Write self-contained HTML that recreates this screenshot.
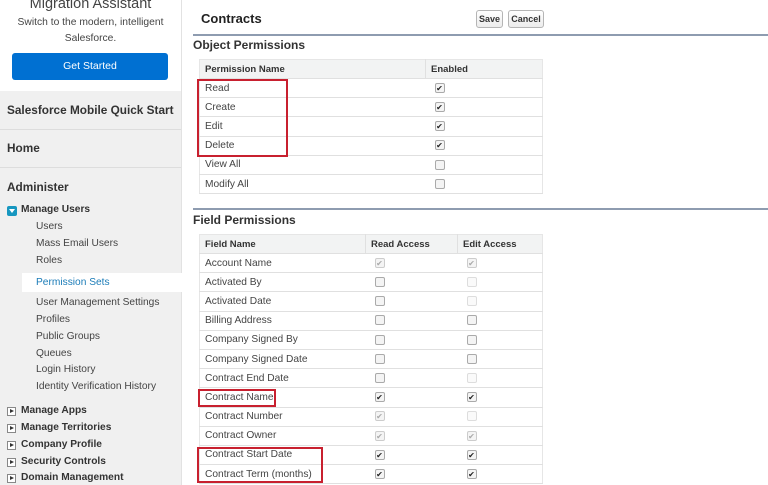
<!DOCTYPE html>
<html><head><style>
*{margin:0;padding:0;box-sizing:border-box}
body{width:768px;height:485px;overflow:hidden;background:#fff;font-family:"Liberation Sans",Arial,sans-serif;position:relative;color:#333}
.a{position:absolute;white-space:nowrap}
#side{position:absolute;left:0;top:0;width:182px;height:485px;background:#f0f0f0;border-right:1px solid #e2e2e2}
.hd{font-weight:bold;font-size:11.8px;color:#333;left:7px}
.sub{font-size:10.2px;color:#444;left:36px}
.grp{font-size:10.2px;font-weight:bold;color:#333;left:21px}
.tri{position:absolute;left:7px;width:9px;height:9px;border:1px solid #888;background:#fff}
.tri:after{content:"";position:absolute;left:2px;top:1px;border-left:4px solid #333;border-top:2.5px solid transparent;border-bottom:2.5px solid transparent}
table{border-collapse:collapse;position:absolute;font-size:10.2px;color:#444}
td,th{border-bottom:1px solid #e0e0e0;text-align:left;padding:0 0 0 5px;height:19.2px;font-weight:normal}
th{background:#f2f3f3;font-weight:bold;font-size:9.5px;color:#333;height:19px;border-right:1px solid #e0e0e0}
th:last-child{border-right:none}
table{border:1px solid #e6e6e6}
.cb{display:inline-block;width:10px;height:10px;border:1px solid #aaa;border-radius:2px;background:#f4f4f4;vertical-align:middle;position:relative;font-size:9px;line-height:8px;text-align:center;color:#222}
.cb.c:after{content:"✔";font-size:8px}
.cb.g{border-color:#ccc}
.cb.g.c:after{color:#aaa}
.cb.l{border-color:#ddd;background:#fafafa}
.red{position:absolute;border:2px solid #c8202f}
.btn{position:absolute;top:10px;height:18px;border:1px solid #b5b5b5;border-radius:3px;background:linear-gradient(#fff,#ececec);font-size:9px;font-weight:bold;color:#333;text-align:center;line-height:16px}
</style></head><body>
<div id="side">
<div style="position:absolute;left:0;top:0;width:181px;height:91px;background:#fff"></div>
<div class="a" style="left:0;width:181px;text-align:center;top:-4px;font-size:14.5px;color:#444">Migration Assistant</div>
<div class="a" style="left:0;width:181px;text-align:center;top:17px;font-size:10.3px;color:#444">Switch to the modern, intelligent</div>
<div class="a" style="left:0;width:181px;text-align:center;top:33px;font-size:10.3px;color:#444">Salesforce.</div>
<div class="a" style="left:12px;top:53px;width:156px;height:27px;background:#0070d2;border-radius:3px;color:#fff;font-size:10.5px;text-align:center;line-height:27px">Get Started</div>
<div class="a hd" style="top:103px">Salesforce Mobile Quick Start</div>
<div class="a" style="left:0;top:129px;width:181px;border-top:1px solid #ddd"></div>
<div class="a hd" style="top:141px">Home</div>
<div class="a" style="left:0;top:167px;width:181px;border-top:1px solid #ddd"></div>
<div class="a hd" style="top:180px">Administer</div>
<div class="a" style="left:7px;top:206px;width:10px;height:10px;background:#1797c0;border-radius:2px"></div>
<div class="a" style="left:9px;top:209px;border-top:4px solid #fff;border-left:3px solid transparent;border-right:3px solid transparent"></div>
<div class="a grp" style="top:204px">Manage Users</div>
<div class="a sub" style="top:221px">Users</div>
<div class="a sub" style="top:238px">Mass Email Users</div>
<div class="a sub" style="top:255px">Roles</div>
<div class="a" style="left:22px;top:273px;width:160px;height:19px;background:#fff"></div>
<div class="a sub" style="top:277px;color:#1b7cb8">Permission Sets</div>
<div class="a sub" style="top:297px">User Management Settings</div>
<div class="a sub" style="top:314px">Profiles</div>
<div class="a sub" style="top:331px">Public Groups</div>
<div class="a sub" style="top:348px">Queues</div>
<div class="a sub" style="top:364px">Login History</div>
<div class="a sub" style="top:381px">Identity Verification History</div>
<div class="tri" style="top:407px"></div><div class="a grp" style="top:405px">Manage Apps</div>
<div class="tri" style="top:424px"></div><div class="a grp" style="top:422px">Manage Territories</div>
<div class="tri" style="top:441px"></div><div class="a grp" style="top:439px">Company Profile</div>
<div class="tri" style="top:458px"></div><div class="a grp" style="top:456px">Security Controls</div>
<div class="tri" style="top:474px"></div><div class="a grp" style="top:472px">Domain Management</div>
</div>

<div class="a" style="left:201px;top:11px;font-size:13px;font-weight:bold;color:#222">Contracts</div>
<div class="btn" style="left:476px;width:27px">Save</div>
<div class="btn" style="left:508px;width:36px">Cancel</div>
<div class="a" style="left:193px;top:34px;width:575px;border-top:2px solid #8e9cb0"></div>
<div class="a" style="left:193px;top:38px;font-size:12px;font-weight:bold;color:#333">Object Permissions</div>
<table style="left:199px;top:59px;width:344px">
<tr><th style="width:226px">Permission Name</th><th>Enabled</th></tr>
<tr><td>Read</td><td style="padding-left:9px"><span class="cb c"></span></td></tr>
<tr><td>Create</td><td style="padding-left:9px"><span class="cb c"></span></td></tr>
<tr><td>Edit</td><td style="padding-left:9px"><span class="cb c"></span></td></tr>
<tr><td>Delete</td><td style="padding-left:9px"><span class="cb c"></span></td></tr>
<tr><td>View All</td><td style="padding-left:9px"><span class="cb"></span></td></tr>
<tr><td>Modify All</td><td style="padding-left:9px"><span class="cb"></span></td></tr>
</table>
<div class="red" style="left:197px;top:79px;width:91px;height:78px"></div>

<div class="a" style="left:193px;top:208px;width:575px;border-top:2px solid #8e9cb0"></div>
<div class="a" style="left:193px;top:213px;font-size:12px;font-weight:bold;color:#333">Field Permissions</div>
<table style="left:199px;top:234px;width:344px">
<tr><th style="width:166px">Field Name</th><th style="width:92px">Read Access</th><th>Edit Access</th></tr>
<tr><td>Account Name</td><td style="padding-left:9px"><span class="cb g c"></span></td><td style="padding-left:9px"><span class="cb g c"></span></td></tr>
<tr><td>Activated By</td><td style="padding-left:9px"><span class="cb"></span></td><td style="padding-left:9px"><span class="cb l"></span></td></tr>
<tr><td>Activated Date</td><td style="padding-left:9px"><span class="cb"></span></td><td style="padding-left:9px"><span class="cb l"></span></td></tr>
<tr><td>Billing Address</td><td style="padding-left:9px"><span class="cb"></span></td><td style="padding-left:9px"><span class="cb"></span></td></tr>
<tr><td>Company Signed By</td><td style="padding-left:9px"><span class="cb"></span></td><td style="padding-left:9px"><span class="cb"></span></td></tr>
<tr><td>Company Signed Date</td><td style="padding-left:9px"><span class="cb"></span></td><td style="padding-left:9px"><span class="cb"></span></td></tr>
<tr><td>Contract End Date</td><td style="padding-left:9px"><span class="cb"></span></td><td style="padding-left:9px"><span class="cb l"></span></td></tr>
<tr><td>Contract Name</td><td style="padding-left:9px"><span class="cb c"></span></td><td style="padding-left:9px"><span class="cb c"></span></td></tr>
<tr><td>Contract Number</td><td style="padding-left:9px"><span class="cb g c"></span></td><td style="padding-left:9px"><span class="cb l"></span></td></tr>
<tr><td>Contract Owner</td><td style="padding-left:9px"><span class="cb g c"></span></td><td style="padding-left:9px"><span class="cb g c"></span></td></tr>
<tr><td>Contract Start Date</td><td style="padding-left:9px"><span class="cb c"></span></td><td style="padding-left:9px"><span class="cb c"></span></td></tr>
<tr><td>Contract Term (months)</td><td style="padding-left:9px"><span class="cb c"></span></td><td style="padding-left:9px"><span class="cb c"></span></td></tr>
</table>
<div class="red" style="left:198px;top:389px;width:78px;height:18px"></div>
<div class="red" style="left:197px;top:447px;width:126px;height:36px"></div>
</body></html>
